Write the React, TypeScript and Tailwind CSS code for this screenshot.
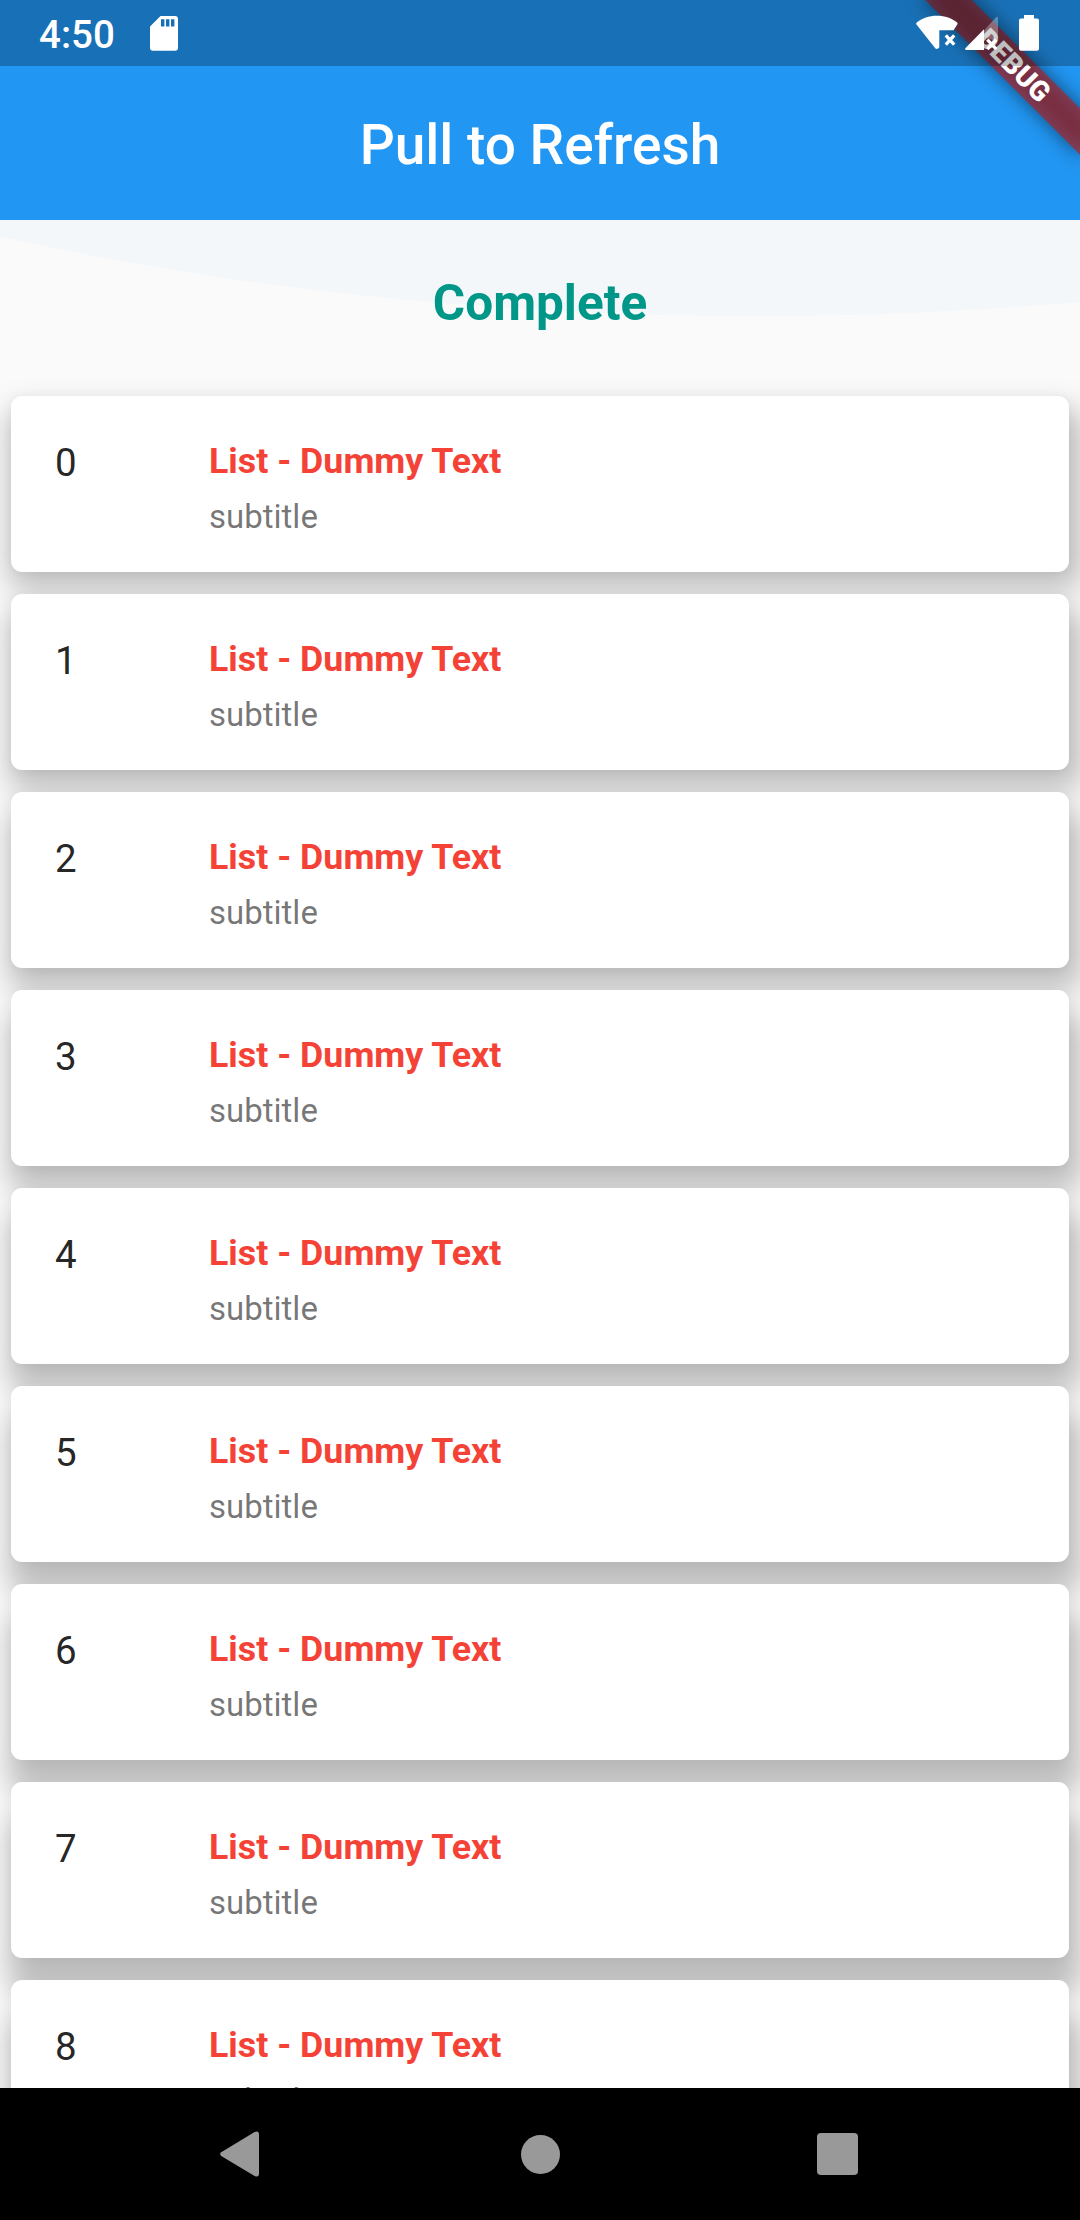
import React from 'react';

interface ListItem {
  id: number;
  title: string;
  subtitle: string;
}

const items: ListItem[] = Array.from({ length: 9 }, (_, i) => ({
  id: i,
  title: 'List - Dummy Text',
  subtitle: 'subtitle'
}));

const CARD_STEP = 198;
const FIRST_CARD_TOP = 396;
const LIGHT_Y = -600;

// The light sits above the screen, so a shadow drops further the lower its card is
const shadowOffset = (index: number) => {
  const top = FIRST_CARD_TOP + index * CARD_STEP;
  return (top - LIGHT_Y) * 0.0137;
};

const StatusBar: React.FC = () => (
  <div className="absolute inset-x-0 top-0 z-30 flex h-[66px] items-start bg-black/25 pl-[39px] pr-[41px] text-white">
    <span className="mt-3 w-[111px] text-[38.5px] font-medium leading-[45px]">4:50</span>
    <svg className="mt-4 shrink-0" width="28" height="35" viewBox="0 0 28 35">
      <path
        fill="currentColor"
        fillRule="evenodd"
        d="M10.5 0H25a3 3 0 0 1 3 3v28.8a3 3 0 0 1-3 3H3a3 3 0 0 1-3-3V10.5zM11 3.3v7.3h3.4V3.3zM16 3.3v7.3h3.4V3.3zM21 3.3v7.3h3.4V3.3z"
      />
    </svg>
    <div className="ml-auto mt-[15px] flex items-start">
      <svg className="mr-[7px]" width="42" height="36" viewBox="0 0 42 36">
        <path
          fill="currentColor"
          d="M21 .8C13 .8 6 3.2.7 7.6Q-.2 8.6.5 9.5L18.8 32.8Q20.6 35 22.4 33.2L23.3 32.2V15.2H37.6L41.2 9.6Q42 8.6 41.1 7.6C36 3.2 29 .8 21 .8Z"
        />
        <path d="M29.8 20.4l8.4 9.2M38.2 20.4l-8.4 9.2" stroke="currentColor" strokeWidth="3.2" />
      </svg>
      <svg className="mr-[21px]" width="33" height="36" viewBox="0 0 33 36">
        <path fill="currentColor" fillOpacity="0.3" d="M19 15.6L31 2.2Q33 .8 33 3V22.5L27.5 25 19 22z" />
        <path fill="currentColor" d="M19 14.2V35H1.2Q-.8 34.6.6 33z" />
        <path d="M22.3 24.6l9 9.6M31.3 24.6l-9 9.6" stroke="currentColor" strokeWidth="3.2" />
      </svg>
      <svg width="20" height="36" viewBox="0 0 20 36">
        <path
          fill="currentColor"
          d="M5 0h10v3.6h3a2 2 0 0 1 2 2v28.2a2 2 0 0 1-2 2H2a2 2 0 0 1-2-2V5.6a2 2 0 0 1 2-2h3z"
        />
      </svg>
    </div>
  </div>
);

const DebugBanner: React.FC = () => (
  <div className="absolute right-0 top-0 z-20 h-[230px] w-[230px] overflow-hidden">
    <div className="absolute left-[54px] top-[49px] h-[33px] w-[220px] rotate-45">
      <div className="absolute inset-0 bg-black/50 blur-[10px]" />
      <div className="absolute inset-0 flex items-center justify-center bg-[#b71c1c]/63 text-[28px] font-black leading-none text-white">
        DEBUG
      </div>
    </div>
  </div>
);

const ListCard: React.FC<{ item: ListItem }> = ({ item }) => {
  const offset = shadowOffset(item.id);

  return (
    <div className="relative isolate shrink-0">
      <div
        className="absolute left-[-2px] right-[-12px] -z-10 rounded-[11px] bg-black/25 blur-[15px]"
        style={{ top: offset, bottom: -offset - 2.4 }}
      />
      <div className="flex h-[176px] rounded-[11px] bg-white px-11 shadow-[0_0_11px_rgba(0,0,0,0.04)]">
        <span className="w-[154px] pt-11 text-[38.5px] leading-[45px] text-black/87">{item.id}</span>
        <div className="flex flex-col pt-11">
          <span className="text-[35.75px] font-bold leading-[42px] text-[#f44336]">{item.title}</span>
          <span className="mt-[15px] text-[33px] leading-[39px] text-black/54">{item.subtitle}</span>
        </div>
      </div>
    </div>
  );
};

const NavigationBar: React.FC = () => (
  <nav className="flex h-[132px] shrink-0 items-center bg-black pl-[220px] text-[#999]">
    <svg width="39" height="46" viewBox="0 0 39 46">
      <path fill="currentColor" d="M1.2 21.2L34.6 1.1Q39 -.7 39 3.6V42.6Q39 46.7 34.6 44.9L1.2 24.9Q-.8 23 1.2 21.2Z" />
    </svg>
    <div className="ml-[262px] h-[39px] w-[39px] rounded-full bg-[#999]" />
    <div className="ml-[257px] h-[42px] w-[41px] rounded bg-[#999]" />
  </nav>
);

const App: React.FC = () => {
  return (
    <div className="relative flex h-[2220px] w-[1080px] flex-col overflow-hidden bg-[#fafafa] font-['Roboto',sans-serif]">
      <StatusBar />
      <DebugBanner />

      {/* App bar */}
      <header className="flex h-[220px] shrink-0 items-center justify-center bg-[#2196f3] pt-[70px]">
        <h1 className="text-[55px] font-medium leading-[64px] text-white">Pull to Refresh</h1>
      </header>

      <main className="relative flex min-h-0 flex-1 flex-col overflow-hidden">
        {/* Overscroll glow */}
        <svg className="absolute left-0 top-0" width="1080" height="100" viewBox="0 220 1080 100">
          <ellipse cx="755" cy="-374" rx="1620" ry="690" fill="#2196f3" fillOpacity="0.03" />
        </svg>

        {/* Refresh status */}
        <div className="relative flex h-[165px] shrink-0 items-center justify-center">
          <p className="text-[49.5px] font-bold leading-[58px] text-[#009688]">Complete</p>
        </div>

        {/* List */}
        <div className="flex flex-col gap-[22px] px-[11px] pt-[11px]">
          {items.map((item) => (
            <ListCard key={item.id} item={item} />
          ))}
        </div>
      </main>

      <NavigationBar />
    </div>
  );
};

export default App;
